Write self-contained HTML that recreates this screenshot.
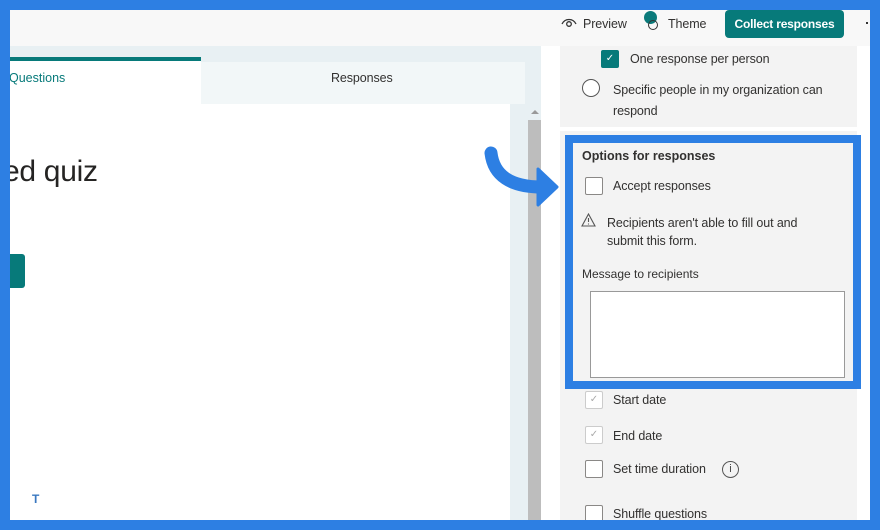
<!DOCTYPE html>
<html><head><style>
*{margin:0;padding:0;box-sizing:border-box}
body{width:880px;height:530px;background:#2d7fe3;position:relative;overflow:hidden;font-family:"Liberation Sans",sans-serif;color:#252423}
.a{position:absolute}
.t{font-size:12.5px;color:#323130;letter-spacing:-0.1px}
.cb{position:absolute;width:18px;height:18px;border:1px solid #8a8886;background:#fff;border-radius:2px}
</style></head><body>
<div class="a" style="left:10px;top:10px;width:860px;height:510px;background:#fff"></div>
<div class="a" style="left:10px;top:10px;width:860px;height:36px;background:#f8f8f8"></div>
<!-- top bar -->
<svg class="a" style="left:561px;top:17px" width="16" height="12" viewBox="0 0 16 12"><path d="M1 7 C4 1 12 1 15 7" fill="none" stroke="#333" stroke-width="1.3"/><circle cx="8" cy="7" r="2.3" fill="none" stroke="#333" stroke-width="1.3"/></svg>
<div class="a t" style="left:583px;top:17px">Preview</div>
<div class="a" style="left:644px;top:11px;width:13px;height:13px;border-radius:50%;background:#0b7a7a"></div>
<div class="a" style="left:648px;top:20px;width:10px;height:10px;border-radius:50%;border:1.3px solid #333"></div>
<div class="a t" style="left:668px;top:17px">Theme</div>
<div class="a" style="left:725px;top:10px;width:119px;height:28px;background:#077a7a;border-radius:4px;color:#fff;font-size:12px;font-weight:bold;text-align:center;line-height:28px;letter-spacing:-0.2px">Collect responses</div>
<div class="a" style="left:866px;top:22px;width:2px;height:2px;background:#333"></div>
<!-- left area -->
<div class="a" style="left:10px;top:46px;width:531px;height:474px;background:#e8f0f3"></div>
<div class="a" style="left:10px;top:57px;width:191px;height:4px;background:#077a7a"></div>
<div class="a" style="left:10px;top:61px;width:191px;height:43px;background:#fff"></div>
<div class="a" style="left:9px;top:71px;font-size:12.5px;color:#077a7a">Questions</div>
<div class="a" style="left:201px;top:62px;width:324px;height:42px;background:#f2f7f8"></div>
<div class="a t" style="left:331px;top:71px">Responses</div>
<div class="a" style="left:10px;top:104px;width:500px;height:416px;background:#fff"></div>
<div class="a" style="left:3px;top:155px;font-size:30px;color:#252423;letter-spacing:-0.3px">ed quiz</div>
<div class="a" style="left:0;top:0;width:10px;height:530px;background:#2d7fe3"></div>
<div class="a" style="left:10px;top:254px;width:15px;height:34px;background:#077a7a;border-radius:0 3px 3px 0"></div>
<div class="a" style="left:32px;top:492px;font-size:12px;font-weight:bold;color:#3a78c0">T</div>
<div class="a" style="left:528px;top:120px;width:13px;height:400px;background:#bdbdbd"></div>
<div class="a" style="left:531px;top:110px;width:0;height:0;border-left:4px solid transparent;border-right:4px solid transparent;border-bottom:4px solid #999"></div>
<!-- right panel -->
<div class="a" style="left:560px;top:46px;width:297px;height:474px;background:#f3f3f3"></div>
<div class="a" style="left:560px;top:127px;width:297px;height:4px;background:#fff"></div>
<div class="cb" style="left:601px;top:50px;background:#077a7a;border-color:#077a7a;color:#fff;font-size:10px;text-align:center;line-height:16px">✓</div>
<div class="a t" style="left:630px;top:52px">One response per person</div>
<div class="a" style="left:582px;top:79px;width:18px;height:18px;border-radius:50%;border:1.3px solid #555;background:#fff"></div>
<div class="a t" style="left:613px;top:80px;line-height:21px;width:240px">Specific people in my organization can respond</div>
<!-- blue box -->
<div class="a" style="left:565px;top:135px;width:296px;height:254px;border:8px solid #2d7fe3;background:#f3f3f3"></div>
<div class="a" style="left:582px;top:149px;font-size:12.5px;font-weight:bold;color:#323130">Options for responses</div>
<div class="cb" style="left:585px;top:177px"></div>
<div class="a t" style="left:613px;top:179px">Accept responses</div>
<svg class="a" style="left:581px;top:213px" width="15" height="14" viewBox="0 0 15 14"><path d="M7.5 1 L14 13 H1 Z" fill="none" stroke="#555" stroke-width="1.1"/><path d="M7.5 5 V9 M7.5 10.5 V11.5" stroke="#555" stroke-width="1.1"/></svg>
<div class="a t" style="left:607px;top:214px;line-height:18px;width:215px">Recipients aren't able to fill out and submit this form.</div>
<div class="a" style="left:582px;top:267px;font-size:12px;color:#323130">Message to recipients</div>
<div class="a" style="left:590px;top:291px;width:255px;height:87px;background:#fff;border:1px solid #999"></div>
<div class="cb" style="left:585px;top:391px;border-color:#ccc;color:#aaa;font-size:10px;text-align:center;line-height:16px">✓</div>
<div class="a t" style="left:613px;top:393px">Start date</div>
<div class="cb" style="left:585px;top:426px;border-color:#ccc;color:#aaa;font-size:10px;text-align:center;line-height:16px">✓</div>
<div class="a t" style="left:613px;top:429px">End date</div>
<div class="cb" style="left:585px;top:460px"></div>
<div class="a t" style="left:613px;top:462px">Set time duration</div>
<div class="a" style="left:722px;top:461px;width:17px;height:17px;border-radius:50%;border:1.2px solid #555;font-size:11px;text-align:center;line-height:15px;color:#444">i</div>
<div class="cb" style="left:585px;top:505px"></div>
<div class="a t" style="left:613px;top:507px">Shuffle questions</div>
<!-- arrow -->
<svg class="a" style="left:480px;top:140px" width="90" height="80" viewBox="480 140 90 80"><path d="M491 153 Q495 187 542 187" fill="none" stroke="#2d7fe3" stroke-width="13" stroke-linecap="round"/><path d="M538 169 L557 187 L538 205 Z" fill="#2d7fe3" stroke="#2d7fe3" stroke-width="3" stroke-linejoin="round"/></svg>
<!-- frame -->
<div class="a" style="left:0;top:0;width:880px;height:10px;background:#2d7fe3"></div>
<div class="a" style="left:0;top:520px;width:880px;height:10px;background:#2d7fe3"></div>
<div class="a" style="left:870px;top:0;width:10px;height:530px;background:#2d7fe3"></div>
</body></html>
